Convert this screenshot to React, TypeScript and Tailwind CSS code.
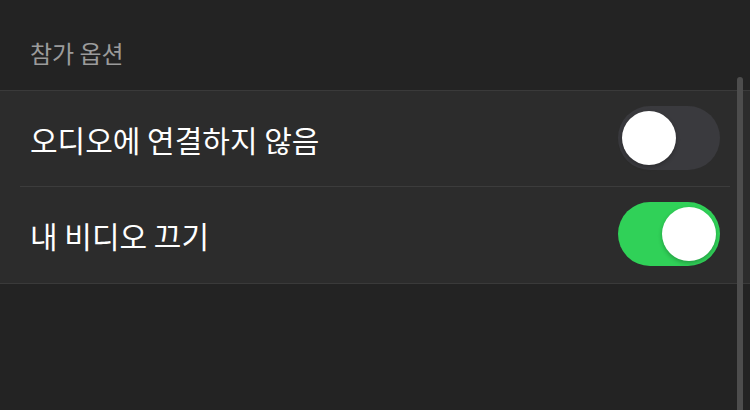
import React from "react";

function Toggle({ on }: { on: boolean }) {
  return (
    <div
      className={`relative w-[102px] h-[64px] mb-[2px] rounded-full ${on ? "bg-[#30d158]" : "bg-[#3a3a3e]"}`}
    >
      <div
        className={`absolute top-[5px] w-[54px] h-[54px] rounded-full bg-white shadow-[0_2px_4px_rgba(0,0,0,0.25)] ${on ? "right-[4px]" : "left-[4px]"}`}
      />
    </div>
  );
}

export default function App() {
  return (
    <div
      className="relative w-[750px] h-[410px] bg-[#232323] overflow-hidden"
      style={{ fontFamily: '"Noto Sans CJK KR", "Noto Sans", sans-serif' }}
    >
      <div className="h-[90px] pl-[30px] pt-[35px] text-[24px] leading-[36px] text-[#9b9b9b]">
        참가 옵션
      </div>
      <div className="bg-[#2c2c2c] border-t border-b border-[#3a3a3a]">
        <div className="flex items-center justify-between h-[95px] pl-[30px] pr-[30px]">
          <span className="text-[30px] leading-[40px] text-white">오디오에 연결하지 않음</span>
          <Toggle on={false} />
        </div>
        <div className="ml-[20px] mr-[20px] h-px bg-[#3c3c3c]" />
        <div className="flex items-center justify-between h-[96px] pl-[30px] pr-[30px]">
          <span className="text-[30px] leading-[40px] text-white">내 비디오 끄기</span>
          <Toggle on={true} />
        </div>
      </div>
      <div className="absolute left-[737px] top-[77px] w-[6px] h-[340px] rounded-full bg-[#4d4d4d]" />
    </div>
  );
}
